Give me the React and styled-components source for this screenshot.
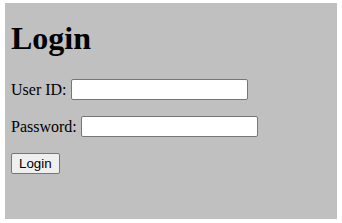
import React from 'react';
import styled, {createGlobalStyle} from 'styled-components';

const GlobalStyle = createGlobalStyle`
  html, body {
    margin: 0;
    padding: 0;
    background: #ffffff;
  }
  body {
    font-family: "Liberation Serif", "Times New Roman", serif;
  }
`

const Page = styled.div`
  margin: 3px 0 0 5px;
  width: 332px;
  height: 216px;
  background-color: #c0c0c0;
  padding: 0 6px;
  box-sizing: border-box;
  overflow: hidden;
`

const Title = styled.h1`
  margin: 0;
  padding-top: 17px;
  font-size: 32px;
  font-weight: bold;
  line-height: 37px;
  color: #000;
`

const Form = styled.form`
  display: flex;
  flex-direction: column;
  gap: 16px;
  margin-top: 22px;
`

const Row = styled.div`
  display: flex;
  align-items: center;
  gap: 4px;
  font-size: 16px;
  color: #000;
`

const Field = styled.input`
  width: 177px;
  height: 21px;
  box-sizing: border-box;
  border: 1px solid #767676;
  border-radius: 2px;
  background: #fff;
  padding: 1px 2px;
  font-size: 13px;
`

const Button = styled.button`
  align-self: flex-start;
  height: 21px;
  padding: 1px 7px;
  font-family: "Liberation Sans", Arial, sans-serif;
  font-size: 13.33px;
  color: #000;
  background: #efefef;
  border: 1px solid #767676;
  border-radius: 2px;
  margin-top: 0;
`

const App = () => {
    return (
        <>
            <GlobalStyle/>
            <Page>
                <Title>Login</Title>
                <Form onSubmit={(event) => event.preventDefault()}>
                    <Row>
                        <label htmlFor="userId">User ID:</label>
                        <Field id="userId" type="text"/>
                    </Row>
                    <Row>
                        <label htmlFor="password">Password:</label>
                        <Field id="password" type="password"/>
                    </Row>
                    <Button type="submit">Login</Button>
                </Form>
            </Page>
        </>
    );
};

export default App;
